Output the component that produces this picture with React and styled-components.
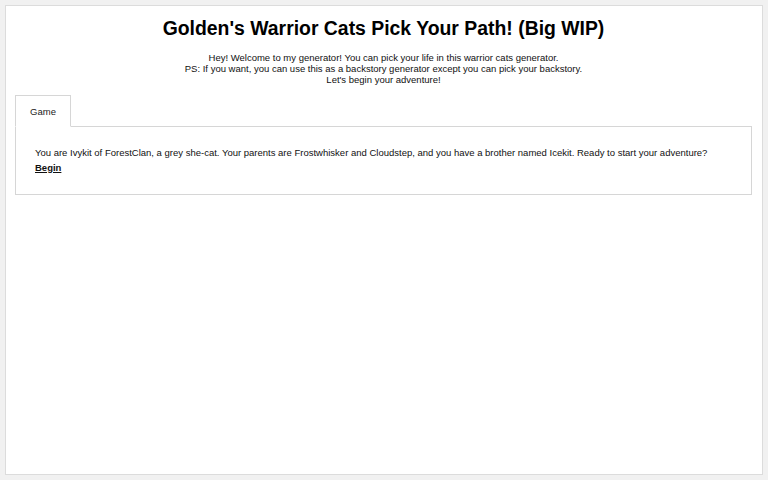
import React from "react";
import styled, { createGlobalStyle } from "styled-components";

const Global = createGlobalStyle`
  html, body { margin: 0; padding: 0; background: #f1f1f1; }
  body { font-family: "Liberation Sans", Arial, sans-serif; color: #111; }
  * { box-sizing: border-box; }
`;

const Page = styled.div`
  padding: 5px;
  height: 480px;
`;

const Card = styled.div`
  background: #fff;
  border: 1px solid #dcdcdc;
  height: 470px;
  padding: 10px 10px 10px 9px;
`;

const Title = styled.h1`
  margin: 0;
  font-size: 19.4px;
  line-height: 24px;
  font-weight: bold;
  text-align: center;
  color: #000;
`;

const Intro = styled.p`
  margin: 12px 0 10px;
  font-size: 9.5px;
  line-height: 11px;
  text-align: center;
  color: #111;
`;

const TabBar = styled.div`
  display: flex;
  border-bottom: 1px solid #d6d6d6;
`;

const Tab = styled.div`
  width: 56px;
  height: 32px;
  margin-bottom: -1px;
  display: flex;
  align-items: center;
  justify-content: center;
  font-size: 9.5px;
  color: #222;
  background: #fff;
  border: 1px solid ${(p) => (p.$active ? "#d6d6d6" : "transparent")};
  border-bottom-color: ${(p) => (p.$active ? "#fff" : "#d6d6d6")};
`;

const Panel = styled.div`
  border: 1px solid #d6d6d6;
  border-top: none;
  padding: 18px 19px 19px;
  font-size: 9.5px;
  line-height: 15px;
  color: #111;
`;

const Story = styled.p`
  margin: 0;
`;

const Begin = styled.a`
  font-weight: bold;
  color: #111;
  text-decoration: underline;
  cursor: pointer;
`;

export default function App() {
  return (
    <>
      <Global />
      <Page>
        <Card>
          <Title>Golden's Warrior Cats Pick Your Path! (Big WIP)</Title>
          <Intro>
            Hey! Welcome to my generator! You can pick your life in this warrior cats generator.
            <br />
            PS: If you want, you can use this as a backstory generator except you can pick your backstory.
            <br />
            Let's begin your adventure!
          </Intro>
          <TabBar>
            <Tab $active>Game</Tab>
          </TabBar>
          <Panel>
            <Story>
              You are Ivykit of ForestClan, a grey she-cat. Your parents are Frostwhisker and Cloudstep, and you have a brother named Icekit. Ready to start your adventure?
            </Story>
            <Begin>Begin</Begin>
          </Panel>
        </Card>
      </Page>
    </>
  );
}
